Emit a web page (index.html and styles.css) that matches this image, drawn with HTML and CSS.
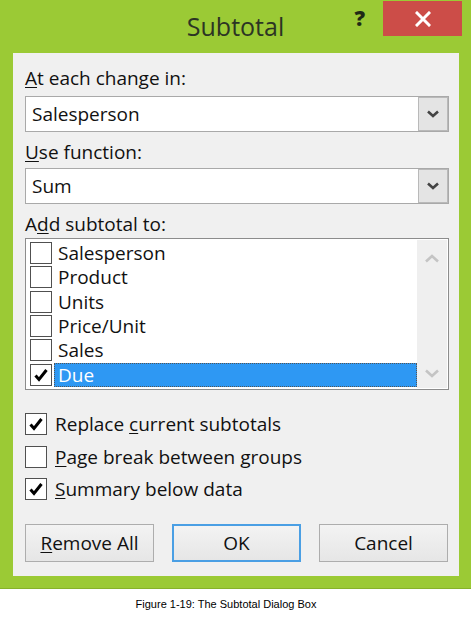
FILE: index.html
```html
<!DOCTYPE html>
<html>
<head>
<meta charset="utf-8">
<link rel="stylesheet" href="styles.css">
</head>
<body>
<div class="dialog">
  <div class="titlebar">
    <div class="spacer"></div>
    <div class="title">Subtotal</div>
    <div class="controls">
      <span class="help">?</span>
      <span class="close">
        <svg width="16" height="16" viewBox="0 0 16 16"><path d="M2 2 L14 14 M14 2 L2 14" stroke="#fff" stroke-width="3" stroke-linecap="square"/></svg>
      </span>
    </div>
  </div>
  <div class="panel">
    <div class="label l1"><u>A</u>t each change in:</div>
    <div class="combo">
      <span class="value">Salesperson</span>
      <span class="drop"><svg width="12" height="8" viewBox="0 0 12 8"><path d="M1 1.5 L6 6 L11 1.5" fill="none" stroke="#444" stroke-width="2.6"/></svg></span>
    </div>
    <div class="label l2"><u>U</u>se function:</div>
    <div class="combo">
      <span class="value">Sum</span>
      <span class="drop"><svg width="12" height="8" viewBox="0 0 12 8"><path d="M1 1.5 L6 6 L11 1.5" fill="none" stroke="#444" stroke-width="2.6"/></svg></span>
    </div>
    <div class="label l3">A<u>d</u>d subtotal to:</div>
    <div class="listbox">
      <div class="items">
        <div class="item"><span class="box"></span><span class="text">Salesperson</span></div>
        <div class="item"><span class="box"></span><span class="text">Product</span></div>
        <div class="item"><span class="box"></span><span class="text">Units</span></div>
        <div class="item"><span class="box"></span><span class="text">Price/Unit</span></div>
        <div class="item"><span class="box"></span><span class="text">Sales</span></div>
        <div class="item"><span class="box"><svg width="16" height="16" viewBox="0 0 16 16"><path d="M2.5 8.5 L6 12.5 L13.5 3" fill="none" stroke="#000" stroke-width="3"/></svg></span><span class="text selected">Due</span></div>
      </div>
      <div class="scrollbar">
        <svg width="14" height="9" viewBox="0 0 14 9"><path d="M1 7.5 L7 2 L13 7.5" fill="none" stroke="#c4c4c4" stroke-width="2.6"/></svg>
        <svg width="14" height="9" viewBox="0 0 14 9"><path d="M1 1.5 L7 7 L13 1.5" fill="none" stroke="#c4c4c4" stroke-width="2.6"/></svg>
      </div>
    </div>
    <div class="options">
      <div class="option"><span class="box"><svg width="16" height="16" viewBox="0 0 16 16"><path d="M2.5 8.5 L6 12.5 L13.5 3" fill="none" stroke="#000" stroke-width="3"/></svg></span><span>Replace <u>c</u>urrent subtotals</span></div>
      <div class="option"><span class="box"></span><span><u>P</u>age break between groups</span></div>
      <div class="option"><span class="box"><svg width="16" height="16" viewBox="0 0 16 16"><path d="M2.5 8.5 L6 12.5 L13.5 3" fill="none" stroke="#000" stroke-width="3"/></svg></span><span><u>S</u>ummary below data</span></div>
    </div>
    <div class="buttons">
      <div class="btn"><u>R</u>emove All</div>
      <div class="btn default">OK</div>
      <div class="btn">Cancel</div>
    </div>
  </div>
</div>
<div class="caption">Figure 1-19: The Subtotal Dialog Box</div>
</body>
</html>
```
FILE: styles.css
```css
* { box-sizing: border-box; }
html, body { margin: 0; padding: 0; background: #fff; }
body {
  width: 474px;
  height: 620px;
  font-family: "Open Sans", "Noto Sans", sans-serif;
  color: #111;
  overflow: hidden;
}
u { text-decoration: underline; text-decoration-thickness: 1px; text-underline-offset: 2px; }

.dialog {
  width: 471px;
  height: 589px;
  background: #9bca35;
  border-bottom: 1px solid #86b22a;
  display: flex;
  flex-direction: column;
}
.titlebar {
  height: 53px;
  display: grid;
  grid-template-columns: 1fr auto 1fr;
}
.title {
  font-size: 25px;
  color: #2c3424;
  padding-top: 9px;
  line-height: 34px;
}
.controls {
  display: flex;
  justify-content: flex-end;
  align-items: flex-start;
}
.help {
  font-weight: 800;
  font-size: 21px;
  color: #1f2a16;
  margin-top: 5px;
  margin-right: 18px;
  line-height: 26px;
}
.close {
  width: 79px;
  height: 35px;
  margin-top: 1px;
  margin-right: 9px;
  background: #cc4d48;
  display: flex;
  align-items: center;
  justify-content: center;
}

.panel {
  margin: 0 12px 12px 13px;
  flex: 1;
  background: #f0f0f0;
  padding: 13px 10px 0 12px;
  font-size: 19px;
  display: flex;
  flex-direction: column;
}
.label { line-height: 24px; height: 24px; }
.l1 { margin-bottom: 6px; }
.l2 { margin-top: 8px; margin-bottom: 4px; }
.l3 { margin-top: 8px; margin-bottom: 2px; }

.combo {
  height: 36px;
  background: #fff;
  border: 1px solid #a9a9a9;
  display: flex;
  align-items: stretch;
}
.combo .value {
  flex: 1;
  padding-left: 6px;
  line-height: 34px;
}
.combo .drop {
  width: 30px;
  background: #e4e4e4;
  border: 1px solid #b9b9b9;
  display: flex;
  align-items: center;
  justify-content: center;
}

.listbox {
  height: 152px;
  background: #fff;
  border: 1px solid #8c8c8c;
  display: flex;
  padding: 1px 1px 1px 4px;
}
.items { flex: 1; padding-top: 1px; }
.item {
  height: 24.3px;
  display: flex;
  align-items: center;
}
.box {
  width: 22px;
  height: 22px;
  border: 1px solid #505050;
  background: #fff;
  display: flex;
  align-items: center;
  justify-content: center;
  flex: none;
}
.item .text {
  margin-left: 2px;
  padding-left: 4px;
  flex: 1;
  line-height: 24px;
}
.item .text.selected {
  background: #2e98f3;
  color: #fff;
  outline: 1px dotted #555;
  outline-offset: -1px;
}
.scrollbar {
  width: 30px;
  background: #efefef;
  display: flex;
  flex-direction: column;
  align-items: center;
  justify-content: space-between;
  padding: 14px 0 10px;
}

.options {
  margin-top: 23px;
  display: flex;
  flex-direction: column;
  gap: 10.5px;
}
.option {
  display: flex;
  align-items: center;
  height: 22px;
  line-height: 22px;
  gap: 8px;
}

.buttons {
  margin-top: 24px;
  display: flex;
  gap: 18px;
}
.btn {
  width: 129px;
  height: 38px;
  border: 1px solid #adadad;
  background: linear-gradient(#f3f3f3, #e6e6e6);
  display: flex;
  align-items: center;
  justify-content: center;
  line-height: 24px;
}
.btn.default {
  border: 2px solid #4a9fe4;
}

.caption {
  width: 452px;
  text-align: center;
  font-family: "Liberation Sans", Arial, sans-serif;
  font-size: 11px;
  margin-top: 9px;
  color: #000;
}
```
